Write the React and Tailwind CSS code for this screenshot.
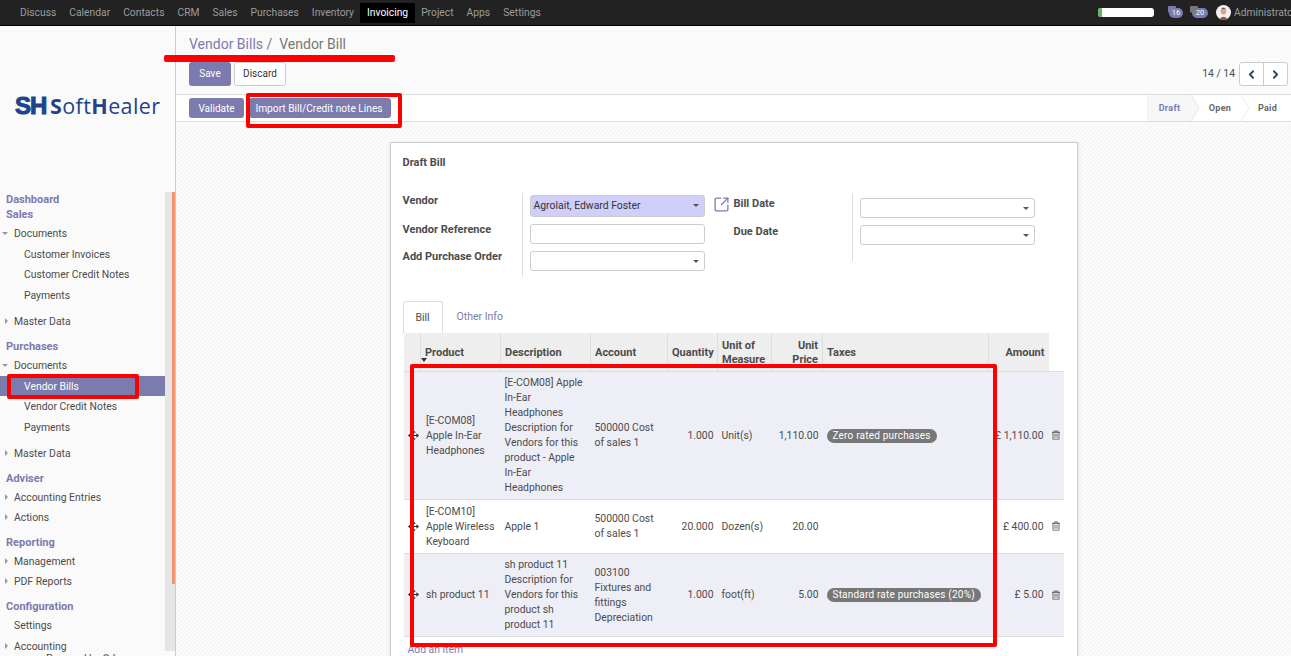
import React from 'react'
import { ChevronLeft, ChevronRight, Move, SquareArrowOutUpRight } from 'lucide-react'
import { FaRegTrashAlt, FaCommentAlt } from 'react-icons/fa'

const navItems = ['Discuss', 'Calendar', 'Contacts', 'CRM', 'Sales', 'Purchases', 'Inventory', 'Invoicing', 'Project', 'Apps', 'Settings']

const sideItems = [
  { label: 'Dashboard', kind: 'head', cls: 'mt-0' },
  { label: 'Sales', kind: 'head', cls: 'mt-0' },
  { label: 'Documents', kind: 'open', cls: 'mt-px' },
  { label: 'Customer Invoices', kind: 'sub', cls: 'mt-px' },
  { label: 'Customer Credit Notes', kind: 'sub', cls: 'mt-0' },
  { label: 'Payments', kind: 'sub', cls: 'mt-px' },
  { label: 'Master Data', kind: 'closed', cls: 'mt-[6px]' },
  { label: 'Purchases', kind: 'head', cls: 'mt-2' },
  { label: 'Documents', kind: 'open', cls: 'mt-px' },
  { label: 'Vendor Bills', kind: 'active', cls: 'mt-px' },
  { label: 'Vendor Credit Notes', kind: 'sub', cls: 'mt-0' },
  { label: 'Payments', kind: 'sub', cls: 'mt-px' },
  { label: 'Master Data', kind: 'closed', cls: 'mt-[6px]' },
  { label: 'Adviser', kind: 'head', cls: 'mt-2' },
  { label: 'Accounting Entries', kind: 'closed', cls: 'mt-px' },
  { label: 'Actions', kind: 'closed', cls: 'mt-0' },
  { label: 'Reporting', kind: 'head', cls: 'mt-2' },
  { label: 'Management', kind: 'closed', cls: 'mt-px' },
  { label: 'PDF Reports', kind: 'closed', cls: 'mt-0' },
  { label: 'Configuration', kind: 'head', cls: 'mt-2' },
  { label: 'Settings', kind: 'plain', cls: 'mt-px' },
  { label: 'Accounting', kind: 'closed', cls: 'mt-px' },
]

const rows = [
  {
    product: ['[E-COM08]', 'Apple In-Ear', 'Headphones'],
    desc: ['[E-COM08] Apple', 'In-Ear', 'Headphones', 'Description for', 'Vendors for this', 'product - Apple', 'In-Ear', 'Headphones'],
    account: ['500000 Cost', 'of sales 1'],
    qty: '1.000', unit: 'Unit(s)', price: '1,110.00', tax: 'Zero rated purchases', amount: '£ 1,110.00',
    cls: 'h-[128px] bg-[#eeeef6]',
  },
  {
    product: ['[E-COM10]', 'Apple Wireless', 'Keyboard'],
    desc: ['Apple 1'],
    account: ['500000 Cost', 'of sales 1'],
    qty: '20.000', unit: 'Dozen(s)', price: '20.00', tax: '', amount: '£ 400.00',
    cls: 'h-[54px] bg-white',
  },
  {
    product: ['sh product 11'],
    desc: ['sh product 11', 'Description for', 'Vendors for this', 'product sh', 'product 11'],
    account: ['003100', 'Fixtures and', 'fittings', 'Depreciation'],
    qty: '1.000', unit: 'foot(ft)', price: '5.00', tax: 'Standard rate purchases (20%)', amount: '£ 5.00',
    cls: 'h-[83px] bg-[#eeeef6]',
  },
]

function Caret({ open }) {
  if (open) return <span className="absolute left-[2px] top-[9px] border-x-[3px] border-t-[3px] border-x-transparent border-t-[#999]" />
  return <span className="absolute left-[5px] top-[7px] border-y-[3px] border-l-[3px] border-y-transparent border-l-[#999]" />
}

function SideRow({ item }) {
  if (item.kind === 'head') {
    return <div className={`${item.cls} h-[15px] pl-[6px] text-[11px] leading-[15px] font-bold text-[#7c7bad]`}>{item.label}</div>
  }
  if (item.kind === 'active') {
    return <div className={`${item.cls} h-5 pl-6 text-[10.4px] leading-[21px] text-white bg-[#7c7bad]`}>{item.label}</div>
  }
  if (item.kind === 'sub') {
    return <div className={`${item.cls} h-5 pl-6 text-[10.4px] leading-[21px] text-[#4c4c4c]`}>{item.label}</div>
  }
  return (
    <div className={`${item.cls} relative h-5 pl-[14px] text-[10.4px] leading-[21px] text-[#4c4c4c]`}>
      {item.kind === 'open' && <Caret open />}
      {item.kind === 'closed' && <Caret />}
      {item.label}
    </div>
  )
}

function Sidebar() {
  return (
    <aside className="relative flex w-[176px] shrink-0 border-r border-[#ccc] bg-[#fafafa]">
      <div className="w-[165px] shrink-0">
        <div className="flex h-[166px] items-start pl-[15px] pt-[67px] text-[#20438a]">
          <span className="w-[35px] shrink-0 text-[24px] leading-[26px] font-black tracking-[-1px] [-webkit-text-stroke:1px_#20438a] [font-family:'Liberation_Sans',sans-serif]">SH</span>
          <span className="text-[21.5px] leading-[26px] tracking-[0.4px] [font-family:'Open_Sans',sans-serif]">
            <b>S</b>oft<b>H</b>ealer
          </span>
        </div>
        {sideItems.map((item, i) => <SideRow key={i} item={item} />)}
      </div>
      <div className="mt-[166px] mb-[5px] flex w-[10px] justify-end bg-[#e5e5e5]">
        <div className="h-[392px] w-[3px] bg-[#f79470]" />
      </div>
      <div className="absolute left-[46px] top-[625px] text-[10.4px] text-[#4c4c4c]">
        Powered by <span className="font-bold text-[#7c7bad]">Odoo</span>
      </div>
    </aside>
  )
}

function TopBar() {
  return (
    <header className="flex h-[26px] shrink-0 items-center border-b border-black bg-[#222] pl-[13.5px] text-[10.3px] text-[#9d9d9d]">
      <nav className="flex items-center">
        {navItems.map(name => (
          <span key={name} className={`flex h-5 items-center px-[6.5px] ${name === 'Invoicing' ? 'bg-black text-white' : ''}`}>{name}</span>
        ))}
      </nav>
      <div className="ml-auto flex items-center">
        <div className="h-[9px] w-[56px] overflow-hidden rounded-[3px] bg-white">
          <div className="h-full w-[4px] bg-[#5cb85c]" />
        </div>
        <span className="relative ml-[15px] flex h-[10px] w-[14px] items-center justify-center rounded-full bg-[#7c7bad] text-[7.5px] text-white">
          <FaCommentAlt className="absolute -left-[1px] -top-[2px] h-2 w-2 text-[#7c7bad]" />
          <span className="relative">16</span>
        </span>
        <span className="relative ml-[9px] flex h-[10px] w-[16px] items-center justify-center rounded-full bg-[#7c7bad] text-[7.5px] text-white">
          <FaCommentAlt className="absolute -left-[2px] -top-[2px] h-2 w-2 text-[#777]" />
          <span className="relative">20</span>
        </span>
        <svg className="ml-2" width="15" height="15" viewBox="0 0 15 15">
          <circle cx="7.5" cy="7.5" r="7.5" fill="#f3f1ef" />
          <ellipse cx="7.5" cy="6" rx="2.8" ry="3.6" fill="#d9a589" />
          <path d="M4.5 5 Q7.5 0.5 10.5 5 L9.5 3.8 L5.5 3.8 Z" fill="#4a342a" />
          <path d="M3.5 14 Q7.5 9.5 11.5 14 L10 15 L5 15 Z" fill="#8c5a4a" />
        </svg>
        <span className="ml-[3px] w-[57px] overflow-hidden whitespace-nowrap">Administrator</span>
      </div>
    </header>
  )
}

function ControlPanel() {
  return (
    <div className="h-[68px] shrink-0 bg-[#fafafa] pl-[13px] pr-[3px]">
      <div className="h-[36px] pt-[9px] text-[14px] leading-[18px]">
        <span className="text-[#7c7bad]">Vendor Bills</span>
        <span className="text-[#777]"> /&nbsp; Vendor Bill</span>
      </div>
      <div className="flex items-center">
        <button className="h-6 w-[42px] rounded-[3px] bg-[#7c7bad] pb-px text-[10px] text-white">Save</button>
        <button className="ml-[3px] h-6 w-[52px] rounded-[3px] border border-[#ccc] bg-white pb-px text-[10px] text-[#333]">Discard</button>
        <span className="ml-auto text-[10.4px] text-[#4c4c4c]">14 / 14</span>
        <div className="ml-[4px] flex h-6 w-[49px] rounded-[3px] border border-[#ccc] bg-white text-[#34495e]">
          <span className="flex flex-1 items-center justify-center border-r border-[#ccc]"><ChevronLeft size={13} strokeWidth={3.5} /></span>
          <span className="flex flex-1 items-center justify-center"><ChevronRight size={13} strokeWidth={3.5} /></span>
        </div>
      </div>
    </div>
  )
}

function StatusBar() {
  return (
    <div className="flex h-[28px] shrink-0 items-center border-y border-[#ddd] bg-white pl-[13px]">
      <button className="h-5 w-[55px] rounded-[3px] bg-[#7c7bad] text-[10px] text-white">Validate</button>
      <button className="ml-[5px] h-5 w-[142px] rounded-[3px] bg-[#7c7bad] pt-px pr-[2px] text-[10.2px] text-white">Import Bill/Credit note Lines</button>
      <div className="ml-auto flex h-full text-[9px] font-bold tracking-[0.3px] text-[#666]">
        <span className="flex w-[44px] items-center justify-center border-l border-[#eee] bg-[#f7f7f7] pt-px text-[#7c7bad]">Draft</span>
        <svg width="9" height="26" viewBox="0 0 9 26" className="-mr-[1px] bg-white">
          <path d="M0 0 L8 13 L0 26 Z" fill="#f7f7f7" />
          <path d="M0 0 L8 13 L0 26" fill="none" stroke="#e6e6e6" />
        </svg>
        <span className="flex w-[42px] items-center justify-center pt-px">Open</span>
        <svg width="9" height="26" viewBox="0 0 9 26">
          <path d="M0 0 L8 13 L0 26" fill="none" stroke="#eee" />
        </svg>
        <span className="mr-[4px] flex w-[37px] items-center justify-center pt-px pr-[2px]">Paid</span>
      </div>
    </div>
  )
}

function Field({ caret, className = '' }) {
  return (
    <div className={`relative rounded-[3px] border border-[#ccc] bg-white ${className}`}>
      {caret && <span className="absolute right-[5px] top-[8px] border-x-[3px] border-t-[3px] border-x-transparent border-t-[#555]" />}
    </div>
  )
}

function BillForm() {
  return (
    <div className="mx-[12px] mt-[23px] flex h-[108px] text-[11px] font-bold text-[#4c4c4c]">
      <div className="w-[119px] shrink-0">
        <div className="h-[29px] leading-[15px]">Vendor</div>
        <div className="h-[27px] leading-[15px]">Vendor Reference</div>
        <div className="h-[27px] leading-[15px]">Add Purchase Order</div>
      </div>
      <div className="h-[84px] border-l border-[#ddd] pl-[7px] pt-[2px]">
        <div className="relative flex h-[22px] w-[175px] items-center rounded-[3px] border border-[#ccc] bg-[#cfcffa] pl-[3px] text-[10.4px] font-normal text-[#333]">
          Agrolait, Edward Foster
          <span className="absolute right-[5px] top-[8px] border-x-[3px] border-t-[3px] border-x-transparent border-t-[#555]" />
        </div>
        <Field className="mt-[7px] h-5 w-[175px]" />
        <Field caret className="mt-[7px] h-5 w-[175px]" />
      </div>
      <div className="ml-[8px] w-[16px] shrink-0 pt-[3px] text-[#7c7bad]">
        <SquareArrowOutUpRight size={17} strokeWidth={1.8} />
      </div>
      <div className="ml-[5px] h-[68px] w-[119px] shrink-0 border-r border-[#ddd]">
        <div className="pt-[3px] leading-[15px]">Bill Date</div>
        <div className="pt-[13px] leading-[15px]">Due Date</div>
      </div>
      <div className="pl-[7px] pt-[5px]">
        <Field caret className="h-5 w-[175px]" />
        <Field caret className="mt-[7px] h-5 w-[175px]" />
      </div>
    </div>
  )
}

function Lines({ items }) {
  return items.map((t, i) => <div key={i} className="whitespace-nowrap">{t}</div>)
}

function BillTable() {
  const thCls = 'border-r border-[#ddd] px-[4px] pt-[2px] align-middle text-[11px] font-bold leading-[14px] text-[#4c4c4c]'
  return (
    <table className="w-[660px] table-fixed border-collapse text-[10.4px] text-[#4c4c4c]">
      <colgroup>
        <col className="w-[17px]" />
        <col className="w-[80px]" />
        <col className="w-[90px]" />
        <col className="w-[77px]" />
        <col className="w-[50px]" />
        <col className="w-[54px]" />
        <col className="w-[51px]" />
        <col className="w-[166px]" />
        <col className="w-[60px]" />
        <col className="w-[15px]" />
      </colgroup>
      <thead>
        <tr className="h-[38px] border-b border-[#ddd]">
          <th className="border-r border-[#ddd] bg-[#eee]" />
          <th className={`${thCls} relative bg-[#eee] text-left`}>
            Product
            <span className="absolute left-0 bottom-[9px] border-x-[3px] border-t-[4px] border-x-transparent border-t-[#333]" />
          </th>
          <th className={`${thCls} bg-[#eee] text-left`}>Description</th>
          <th className={`${thCls} bg-[#eee] text-left`}>Account</th>
          <th className={`${thCls} bg-[#eee] text-left`}>Quantity</th>
          <th className={`${thCls} bg-[#eee] text-left`}>Unit of Measure</th>
          <th className={`${thCls} bg-[#eee] text-right`}>Unit Price</th>
          <th className={`${thCls} bg-[#eee] text-left`}>Taxes</th>
          <th className="bg-[#eee] px-[4px] pt-[2px] text-right text-[11px] font-bold">Amount</th>
          <th className="bg-white" />
        </tr>
      </thead>
      <tbody>
        {rows.map((r, i) => (
          <tr key={i} className={`${r.cls} border-b border-[#ddd] leading-[15px]`}>
            <td className="pl-[4px]"><Move size={11} strokeWidth={2.5} className="text-[#333]" /></td>
            <td className="pl-[5.5px]"><Lines items={r.product} /></td>
            <td className="pl-[4px]"><Lines items={r.desc} /></td>
            <td className="pl-[4px]"><Lines items={r.account} /></td>
            <td className="px-[4px] text-right">{r.qty}</td>
            <td className="pl-[4px]">{r.unit}</td>
            <td className="px-[4px] text-right whitespace-nowrap">{r.price}</td>
            <td className="px-[4px]">
              {r.tax && <span className="inline-block rounded-full bg-[#777] px-[6px] text-[10px] leading-[14px] tracking-[0.2px] whitespace-nowrap text-white">{r.tax}</span>}
            </td>
            <td className="pl-[4px] pr-[5px] text-right whitespace-nowrap">{r.amount}</td>
            <td className="pl-[3px]"><FaRegTrashAlt className="h-[10px] w-[8px] text-[#555]" /></td>
          </tr>
        ))}
      </tbody>
    </table>
  )
}

function Sheet() {
  return (
    <div className="mx-auto mt-5 w-[688px] border border-[#ccc] bg-white shadow-[0_1px_4px_rgba(0,0,0,0.1)]">
      <div className="px-[12px] pt-[12px] text-[11px] leading-[15px] font-bold text-[#4c4c4c]">Draft Bill</div>
      <BillForm />
      <div className="ml-[12px] flex h-[32px] text-[10.5px]">
        <span className="flex w-[40px] items-center justify-center rounded-t-[3px] border-x border-t border-[#ddd] bg-white text-[#4c4c4c]">Bill</span>
        <span className="ml-[14px] flex items-center text-[#7c7bad]">Other Info</span>
      </div>
      <div className="ml-[13px]">
        <BillTable />
        <div className="mt-[5px] ml-[4px] text-[10.4px] text-[#7c7bad]">Add an item</div>
      </div>
    </div>
  )
}

function RedMarks() {
  return (
    <>
      <div className="absolute left-[164px] top-[55px] h-[7px] w-[231px] rounded-[2px] bg-[#f00]" />
      <div className="absolute left-[246px] top-[93px] h-[35px] w-[156px] rounded-[2px] border-4 border-[#f00]" />
      <div className="absolute left-[7px] top-[374px] h-[25px] w-[132px] rounded-[2px] border-4 border-[#f00]" />
      <div className="absolute left-[410px] top-[364px] h-[283px] w-[587px] rounded-[2px] border-4 border-[#f00]" />
    </>
  )
}

export default function App() {
  return (
    <div className="relative flex h-[656px] w-[1291px] flex-col overflow-hidden bg-white font-['Roboto',sans-serif]">
      <TopBar />
      <div className="flex min-h-0 flex-1">
        <Sidebar />
        <main className="flex min-w-0 flex-1 flex-col overflow-hidden bg-[#f9f9f9]">
          <ControlPanel />
          <StatusBar />
          <div className="flex-1 bg-[repeating-conic-gradient(#f6f6f6_0_25%,#fcfcfc_0_50%)] bg-[length:4px_4px]">
            <Sheet />
          </div>
        </main>
      </div>
      <RedMarks />
    </div>
  )
}
